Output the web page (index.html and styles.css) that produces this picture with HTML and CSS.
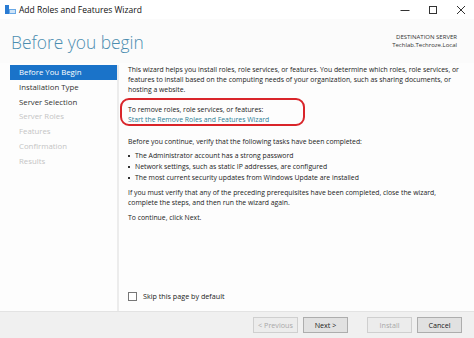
FILE: index.html
```html
<!DOCTYPE html>
<html lang="en">
<head>
  <meta charset="UTF-8" />
  <title>Add Roles and Features Wizard</title>
  <link rel="stylesheet" href="styles.css">
</head>
<body>

<div class="window">
  <div class="titlebar">
    <svg class="app-icon" width="11" height="10" viewBox="0 0 11 10">
      <rect x="0" y="0" width="4" height="9" fill="#2b7cd3"/>
      <rect x="4" y="4" width="7" height="5" fill="#6aa9e6"/>
      <rect x="5" y="5" width="5" height="3" fill="#cfe4f7"/>
    </svg>
    <span class="title">Add Roles and Features Wizard</span>
    <div class="controls">
      <svg width="10" height="10" viewBox="0 0 10 10"><path d="M0.5 5.5h9" stroke="#333" stroke-width="1"/></svg>
      <svg width="10" height="10" viewBox="0 0 10 10"><rect x="1.5" y="1.5" width="7" height="7" fill="none" stroke="#333" stroke-width="1"/></svg>
      <svg width="10" height="10" viewBox="0 0 10 10"><path d="M1 1l8 8M9 1l-8 8" stroke="#333" stroke-width="1"/></svg>
    </div>
  </div>

  <div class="header">
    <h1>Before you begin</h1>
    <div class="dest">
      <div>DESTINATION SERVER</div>
      <div>Techlab.Techroze.Local</div>
    </div>
  </div>

  <div class="main">
    <ul class="nav">
      <li class="active">Before You Begin</li>
      <li>Installation Type</li>
      <li>Server Selection</li>
      <li class="disabled">Server Roles</li>
      <li class="disabled">Features</li>
      <li class="disabled">Confirmation</li>
      <li class="disabled">Results</li>
    </ul>

    <div class="content">
      <p class="intro">This wizard helps you install roles, role services, or features. You determine which roles, role services, or features to install based on the computing needs of your organization, such as sharing documents, or hosting a website.</p>

      <div class="remove">
        <p>To remove roles, role services, or features:<br>
        <a href="#">Start the Remove Roles and Features Wizard</a></p>
        <div class="highlight"></div>
      </div>

      <p class="verify">Before you continue, verify that the following tasks have been completed:</p>
      <ul class="tasks">
        <li>The Administrator account has a strong password</li>
        <li>Network settings, such as static IP addresses, are configured</li>
        <li>The most current security updates from Windows Update are installed</li>
      </ul>
      <p>If you must verify that any of the preceding prerequisites have been completed, close the wizard, complete the steps, and then run the wizard again.</p>
      <p>To continue, click Next.</p>

      <label class="skip"><span class="box"></span>Skip this page by default</label>
    </div>
  </div>

  <div class="footer">
    <button class="btn" disabled>&lt; Previous</button>
    <button class="btn">Next &gt;</button>
    <button class="btn install" disabled>Install</button>
    <button class="btn">Cancel</button>
  </div>
</div>

</body>
</html>
```

FILE: styles.css
```css
* { box-sizing: border-box; }
body {
  margin: 0;
  background: #fff;
  font-family: 'Open Sans', 'Noto Sans', sans-serif;
  color: #1e1e1e;
  overflow: hidden;
}
.window {
  width: 474px;
  height: 338px;
  display: flex;
  flex-direction: column;
  background: #fdfdfd;
}
.titlebar {
  height: 19px;
  display: flex;
  align-items: center;
  padding-left: 5px;
  background: #fff;
}
.app-icon { margin-right: 3px; }
.title {
  font-size: 8.5px;
  color: #111;
}
.controls {
  margin-left: auto;
  display: flex;
  gap: 18px;
  padding-right: 8px;
}
.header {
  height: 44px;
  display: flex;
  justify-content: space-between;
  align-items: flex-start;
  padding: 11px 17px 0 11px;
  background: #fbfbfb;
}
.header h1 {
  margin: 0;
  font-weight: 300;
  font-size: 17.4px;
  color: #4b8db0;
}
.dest {
  text-align: right;
  font-size: 6px;
  line-height: 8px;
  color: #333;
  padding-top: 3px;
}
.main {
  flex: 1;
  display: flex;
  background: #fdfdfd;
}
.nav {
  list-style: none;
  margin: 2px 0 0 10px;
  padding: 0;
  width: 109px;
  font-size: 7.8px;
  border-right: 2px solid #ececec;
}
.nav li {
  height: 14.8px;
  line-height: 14.8px;
  padding-left: 9px;
  color: #333;
}
.nav li.active {
  background: #1a73c9;
  color: #fff;
}
.nav li.disabled { color: #c4c4c4; }
.content {
  flex: 1;
  padding: 2px 8px 0 9px;
  font-size: 6.85px;
  line-height: 10px;
  color: #222;
  display: flex;
  flex-direction: column;
}
.content p { margin: 0 0 5px 0; }
.content p.intro { margin-bottom: 10px; }
.content p.verify { margin-bottom: 4px; }
.remove {
  position: relative;
  margin-bottom: 7px;
}
.remove a {
  color: #2f7d96;
  text-decoration: none;
}
.highlight {
  position: absolute;
  left: -8px;
  top: -7px;
  width: 185px;
  height: 28px;
  border: 2px solid #d9252a;
  border-radius: 9px;
}
.tasks {
  list-style: none;
  margin: 0 0 5px 0;
  padding: 0;
}
.tasks li {
  line-height: 10.8px;
  padding-left: 7px;
  position: relative;
}
.tasks li::before {
  content: '';
  position: absolute;
  left: 0;
  top: 4px;
  width: 2px;
  height: 2px;
  background: #333;
}
.skip {
  margin-top: auto;
  margin-bottom: 10px;
  display: flex;
  align-items: center;
  font-size: 7.2px;
}
.skip .box {
  width: 9px;
  height: 9px;
  border: 1px solid #777;
  background: #fff;
  margin-right: 6px;
}
.footer {
  height: 27px;
  display: flex;
  justify-content: flex-end;
  align-items: center;
  padding-right: 12px;
  background: #f0f0f0;
  border-top: 1px solid #e3e3e3;
}
.btn {
  width: 45px;
  height: 16px;
  margin-left: 5px;
  font-family: 'Open Sans', 'Noto Sans', sans-serif;
  font-size: 7.2px;
  color: #222;
  background: #e1e1e1;
  border: 1px solid #adadad;
  padding: 0;
}
.btn:disabled {
  color: #a8a8a8;
  background: #ececec;
  border-color: #cfcfcf;
}
.btn.install { margin-left: 19px; }
```
